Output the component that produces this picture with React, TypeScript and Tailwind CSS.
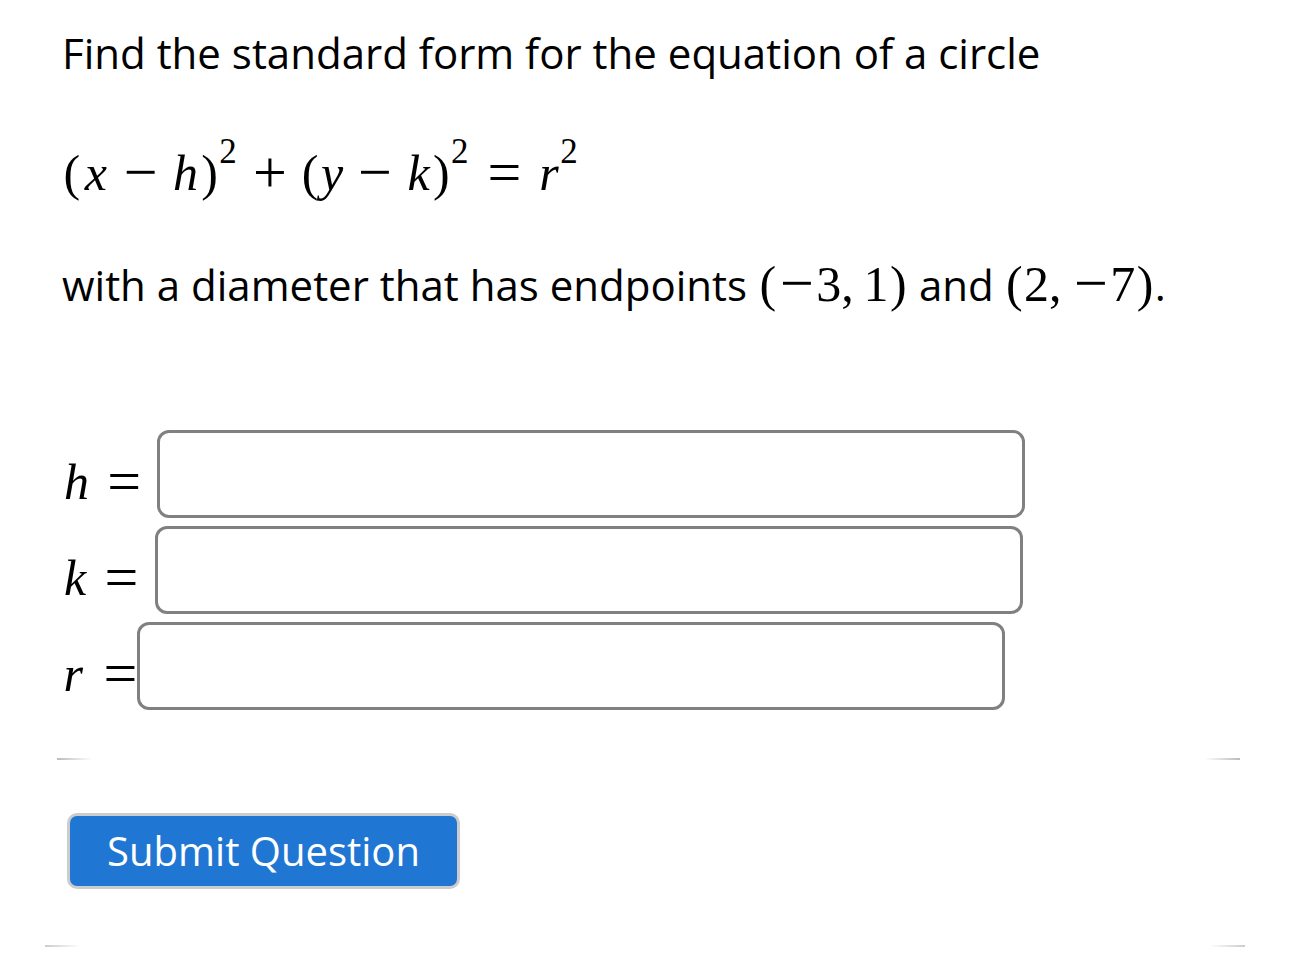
import React from 'react';

const serif = { fontFamily: '"Liberation Serif", "DejaVu Serif", serif' };

// one glyph in a box of fixed width, sized like KaTeX metrics
const G: React.FC<{ w: string; i?: boolean; children: React.ReactNode }> = ({ w, i, children }) => (
  <span className={`inline-block text-center ${w} ${i ? 'italic' : ''}`}>{children}</span>
);

// operators are drawn a bit larger, as the math font has wider ones
const Op: React.FC<{ w: string; children: React.ReactNode }> = ({ w, children }) => (
  <span className={`inline-block text-center ${w}`}>
    <span className="text-[60px] leading-none relative top-[2px]">{children}</span>
  </span>
);

const Sq: React.FC = () => (
  <span className="inline-block w-[0.4em] relative -top-[27px]">
    <span className="text-[35px]">2</span>
  </span>
);

const Row: React.FC<{ label: React.ReactNode }> = ({ label }) => (
  <div className="flex items-center h-[96px]">
    <span className="text-[50px] leading-none whitespace-nowrap pt-[10px]" style={serif}>
      {label}
    </span>
    <input
      type="text"
      className="w-[868px] h-[88px] border-[3px] border-[#808080] rounded-[12px] bg-white outline-none"
    />
  </div>
);

export default function App() {
  return (
    <div
      className="min-h-screen bg-white text-black pl-[62px] pr-[40px] pt-[24px]"
      style={{ fontFamily: '"Open Sans", "DejaVu Sans", sans-serif' }}
    >
      <p className="text-[42px] leading-[58px]">Find the standard form for the equation of a circle</p>

      <p className="text-[50px] leading-[60px] mt-[58px] whitespace-nowrap" style={serif}>
        <G w="w-[0.389em]">(</G>
        <G w="w-[0.572em]" i>x</G>
        <Op w="w-[1.222em]">−</Op>
        <G w="w-[0.576em]" i>h</G>
        <G w="w-[0.389em]">)</G>
        <Sq />
        <Op w="w-[1.222em]">+</Op>
        <G w="w-[0.389em]">(</G>
        <G w="w-[0.49em]" i>y</G>
        <Op w="w-[1.222em]">−</Op>
        <G w="w-[0.521em]" i>k</G>
        <G w="w-[0.389em]">)</G>
        <Sq />
        <Op w="w-[1.334em]">=</Op>
        <G w="w-[0.451em]" i>r</G>
        <Sq />
      </p>

      <p className="text-[42px] leading-[60px] mt-[42px] whitespace-nowrap">
        with a diameter that has endpoints{' '}
        <span className="text-[50px]" style={serif}>
          <G w="w-[0.389em]">(</G>
          <Op w="w-[0.778em]">−</Op>
          <G w="w-[0.5em]">3</G>
          <span className="inline-block w-[0.445em]">,</span>
          <G w="w-[0.5em]">1</G>
          <G w="w-[0.389em]">)</G>
        </span>{' '}
        and{' '}
        <span className="text-[50px]" style={serif}>
          <G w="w-[0.389em]">(</G>
          <G w="w-[0.5em]">2</G>
          <span className="inline-block w-[0.445em]">,</span>
          <Op w="w-[0.778em]">−</Op>
          <G w="w-[0.5em]">7</G>
          <G w="w-[0.389em]">)</G>
        </span>
        .
      </p>

      <div className="mt-[111px] flex flex-col">
        <Row
          label={
            <>
              <G w="w-[0.576em]" i>h</G>
              <Op w="w-[1.334em]">=</Op>
            </>
          }
        />
        <Row
          label={
            <>
              <G w="w-[0.521em]" i>k</G>
              <Op w="w-[1.334em]">=</Op>
            </>
          }
        />
        <Row
          label={
            <>
              <G w="w-[0.451em]" i>r</G>
              <span className="inline-block w-[1.056em] text-right">
                <span className="text-[60px] leading-none relative top-[2px]">=</span>
              </span>
            </>
          }
        />
      </div>

      <div className="mt-[44px] -ml-[5px] mr-[10px] h-[2px] bg-[linear-gradient(to_right,#bbb,#fff_3%,#fff_97%,#bbb)]" />

      <button className="mt-[53px] ml-[5px] h-[76px] w-[393px] rounded-[10px] border-[3px] border-[#cccccc] bg-[#1f76d3] text-white text-[40px] leading-none">
        Submit Question
      </button>

      <div className="mt-[56px] -ml-[17px] mr-[5px] h-[2px] bg-[linear-gradient(to_right,#ccc,#fff_3%,#fff_97%,#ccc)]" />
    </div>
  );
}
